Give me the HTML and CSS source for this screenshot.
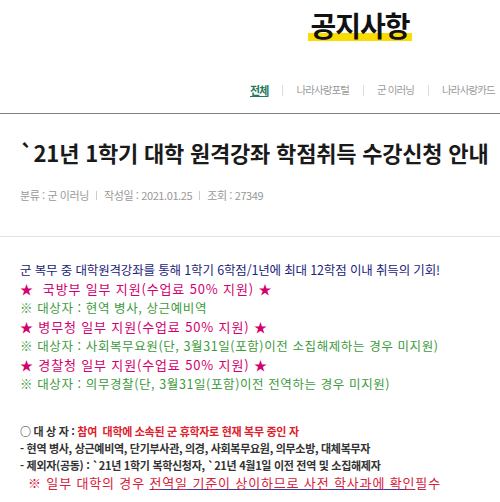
FILE: index.html
```html
<!DOCTYPE html>
<html lang="ko">
<head>
<meta charset="utf-8">
<link rel="stylesheet" href="styles.css">
</head>
<body>
<div class="page">
  <header class="head">
    <h1 class="head-title"><span class="hl">공지사항</span></h1>
    <nav class="tabs">
      <a class="tab active">전체</a>
      <span class="sep"></span>
      <a class="tab">나라사랑포털</a>
      <span class="sep"></span>
      <a class="tab">군 이러닝</a>
      <span class="sep"></span>
      <a class="tab">나라사랑카드</a>
    </nav>
  </header>
  <section class="post-head">
    <h2 class="post-title">`21년 1학기 대학 원격강좌 학점취득 수강신청 안내</h2>
    <div class="meta">
      <span>분류 : 군 이러닝</span><span class="msep"></span><span>작성일 : 2021.01.25</span><span class="msep"></span><span>조회 : 27349</span>
    </div>
  </section>
  <section class="body">
    <p class="navy">군 복무 중 대학원격강좌를 통해 1학기 6학점/1년에 최대 12학점 이내 취득의 기회!</p>
    <p class="pink">★&nbsp; 국방부 일부 지원(수업료 50% 지원) ★</p>
    <p class="green">※ 대상자 : 현역 병사, 상근예비역</p>
    <p class="pink">★ 병무청 일부 지원(수업료 50% 지원) ★</p>
    <p class="green">※ 대상자 : 사회복무요원(단, 3월31일(포함)이전 소집해제하는 경우 미지원)</p>
    <p class="pink">★ 경찰청 일부 지원(수업료 50% 지원) ★</p>
    <p class="green">※ 대상자 : 의무경찰(단, 3월31일(포함)이전 전역하는 경우 미지원)</p>
    <div class="box">
      <p class="dark">○ 대 상 자 : <span class="red">참여&nbsp; 대학에 소속된 군 휴학자로 현재 복무 중인 자</span></p>
      <p class="dark">- 현역 병사, 상근예비역, 단기부사관, 의경, 사회복무요원, 의무소방, 대체복무자</p>
      <p class="dark">- 제외자(공동) : `21년 1학기 복학신청자, `21년 4월1일 이전 전역 및 소집해제자</p>
      <p class="warn">※ 일부 대학의 경우 <span class="ul">전역일 기준이 상이하므로 사전 학사과에 확인</span>필수</p>
    </div>
  </section>
</div>
</body>
</html>
```
FILE: styles.css
```css
html, body {
  margin: 0;
  padding: 0;
  overflow: hidden;
  background: #fff;
}
.page {
  width: 720px;
  font-family: "Noto Sans CJK KR", "Noto Sans", sans-serif;
  color: #222;
}
.head {
  border-bottom: 1px solid #808080;
}
.head-title {
  margin: 0;
  padding-top: 6px;
  text-align: center;
  font-size: 28px;
  font-weight: 700;
  line-height: 38px;
  letter-spacing: -1px;
  color: #111;
}
.hl {
  display: inline-block;
  padding: 0 2px;
  background: linear-gradient(to bottom, transparent 72%, #fbdc00 72%, #fbdc00 92%, transparent 92%);
}
.tabs {
  display: flex;
  align-items: center;
  padding: 38px 0 15px 250px;
  font-size: 10.5px;
  line-height: 16px;
}
.tab {
  color: #9a9a9a;
  letter-spacing: -0.9px;
}
.tab.active {
  color: #1f7a5e;
  font-weight: 700;
  font-size: 11px;
  text-decoration: underline;
}
.sep {
  width: 1px;
  height: 11px;
  background: #ddd;
  margin: 0 13px 0 14px;
}
.post-head {
  width: 500px;
  border-bottom: 1px solid #e2e2e2;
  padding: 23px 0 34px 20px;
  box-sizing: border-box;
}
.post-title {
  margin: 0;
  font-size: 22px;
  line-height: 30px;
  font-weight: 700;
  letter-spacing: -0.2px;
  color: #1a1a1a;
}
.meta {
  margin-top: 21px;
  display: flex;
  align-items: center;
  font-size: 11px;
  line-height: 14px;
  color: #999;
  letter-spacing: -0.4px;
}
.msep {
  width: 1px;
  height: 9px;
  background: #ccc;
  margin: 0 7px;
}
.body {
  padding: 23px 0 0 20px;
}
.body p {
  margin: 0;
  white-space: nowrap;
}
.navy {
  color: #1c237a;
  font-size: 12.5px;
  line-height: 19px;
  letter-spacing: -0.15px;
}
.pink {
  color: #d4006e;
  font-size: 13px;
  line-height: 19px;
  letter-spacing: 0.85px;
}
.green {
  color: #3d9a3d;
  font-size: 12.5px;
  line-height: 19px;
  letter-spacing: 0.6px;
}
.box {
  padding-top: 30px;
}
.dark {
  color: #333;
  font-size: 11px;
  font-weight: 700;
  line-height: 17px;
  letter-spacing: -0.3px;
}
.red {
  color: #e0202c;
}
.warn {
  color: #d8203a;
  font-size: 13px;
  line-height: 17px;
  letter-spacing: 0.85px;
  padding-left: 8px;
}
.ul {
  text-decoration: underline;
  text-decoration-color: #3b3ba0;
}
```
